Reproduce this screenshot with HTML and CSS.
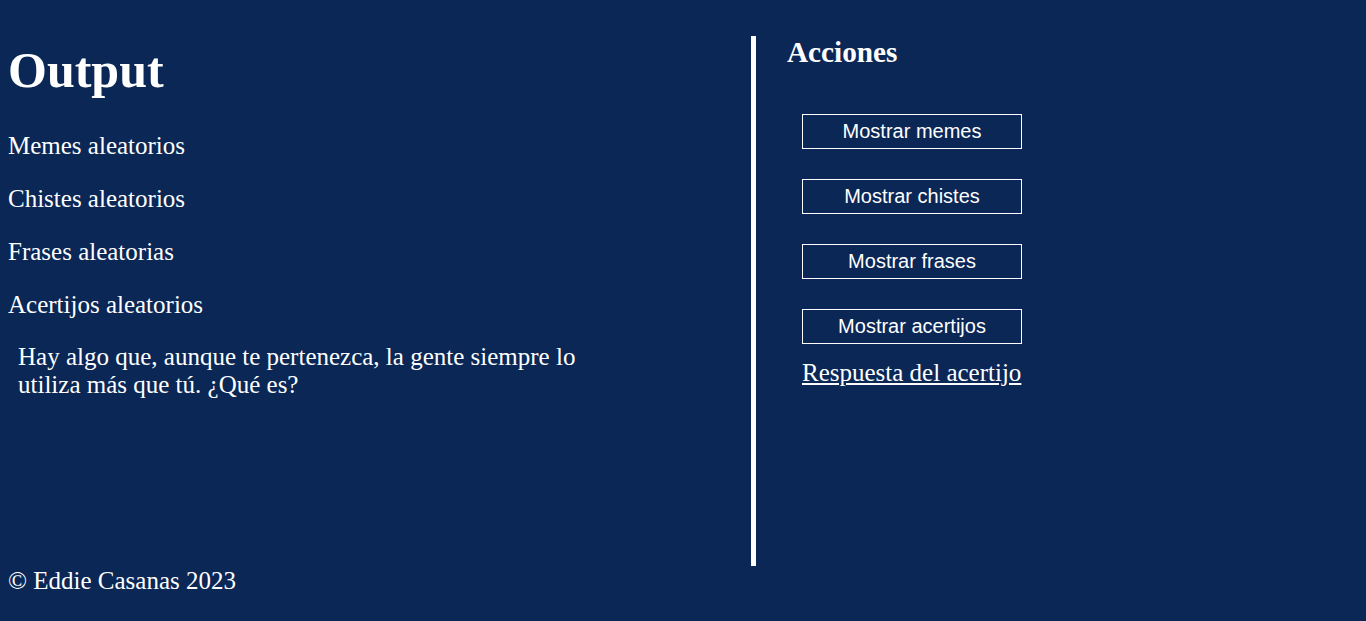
FILE: index.html
```html
<!DOCTYPE html>
<html lang="es">
<head>
<meta charset="utf-8">
<title>Output</title>
<link rel="stylesheet" href="styles.css">
</head>
<body>
<div class="page">
  <div class="layout">
    <main class="output">
      <h1 class="title">Output</h1>
      <p class="item">Memes aleatorios</p>
      <p class="item">Chistes aleatorios</p>
      <p class="item">Frases aleatorias</p>
      <p class="item">Acertijos aleatorios</p>
      <div class="riddle">Hay algo que, aunque te pertenezca, la gente siempre lo utiliza más que tú. ¿Qué es?</div>
    </main>
    <aside class="actions">
      <h3 class="actions-title">Acciones</h3>
      <div class="buttons">
        <button class="btn">Mostrar memes</button>
        <button class="btn">Mostrar chistes</button>
        <button class="btn">Mostrar frases</button>
        <button class="btn">Mostrar acertijos</button>
      </div>
      <a class="answer" href="#">Respuesta del acertijo</a>
    </aside>
  </div>
  <footer class="footer">© Eddie Casanas 2023</footer>
</div>
</body>
</html>
```
FILE: styles.css
```css
html, body {
  margin: 0;
  padding: 0;
  background: #0a2756;
  color: #ffffff;
  font-family: "Liberation Serif", "Times New Roman", serif;
  font-size: 25px;
}
.page {
  padding: 0 8px;
  height: 621px;
  box-sizing: border-box;
  overflow: hidden;
}
.layout {
  display: flex;
  margin-top: 36px;
  height: 530px;
}
.output {
  flex: 0 0 743px;
  display: flex;
  flex-direction: column;
}
.title {
  font-size: 50px;
  font-weight: bold;
  margin: 6px 0 33px 0;
  line-height: 57px;
}
.item {
  margin: 0 0 25px 0;
  line-height: 28px;
}
.riddle {
  margin-top: -1px;
  padding: 0 10px;
  width: 590px;
  line-height: 28px;
}
.actions {
  flex: 1;
  border-left: 5px solid #ffffff;
  padding-left: 31px;
}
.actions-title {
  font-size: 29.25px;
  font-weight: bold;
  margin: 0;
  line-height: 33px;
}
.buttons {
  display: flex;
  flex-direction: column;
  align-items: flex-start;
  gap: 30px;
  padding: 45px 15px 15px 15px;
}
.btn {
  width: 220px;
  height: 35px;
  background: transparent;
  border: 1px solid #ffffff;
  color: #ffffff;
  font-family: "Liberation Sans", Arial, sans-serif;
  font-size: 20px;
  padding: 0;
  margin: 0;
  cursor: pointer;
}
.answer {
  display: inline-block;
  margin-left: 15px;
  color: #ffffff;
  text-decoration: underline;
  line-height: 28px;
}
.footer {
  line-height: 28px;
  margin-top: 1px;
}
```
